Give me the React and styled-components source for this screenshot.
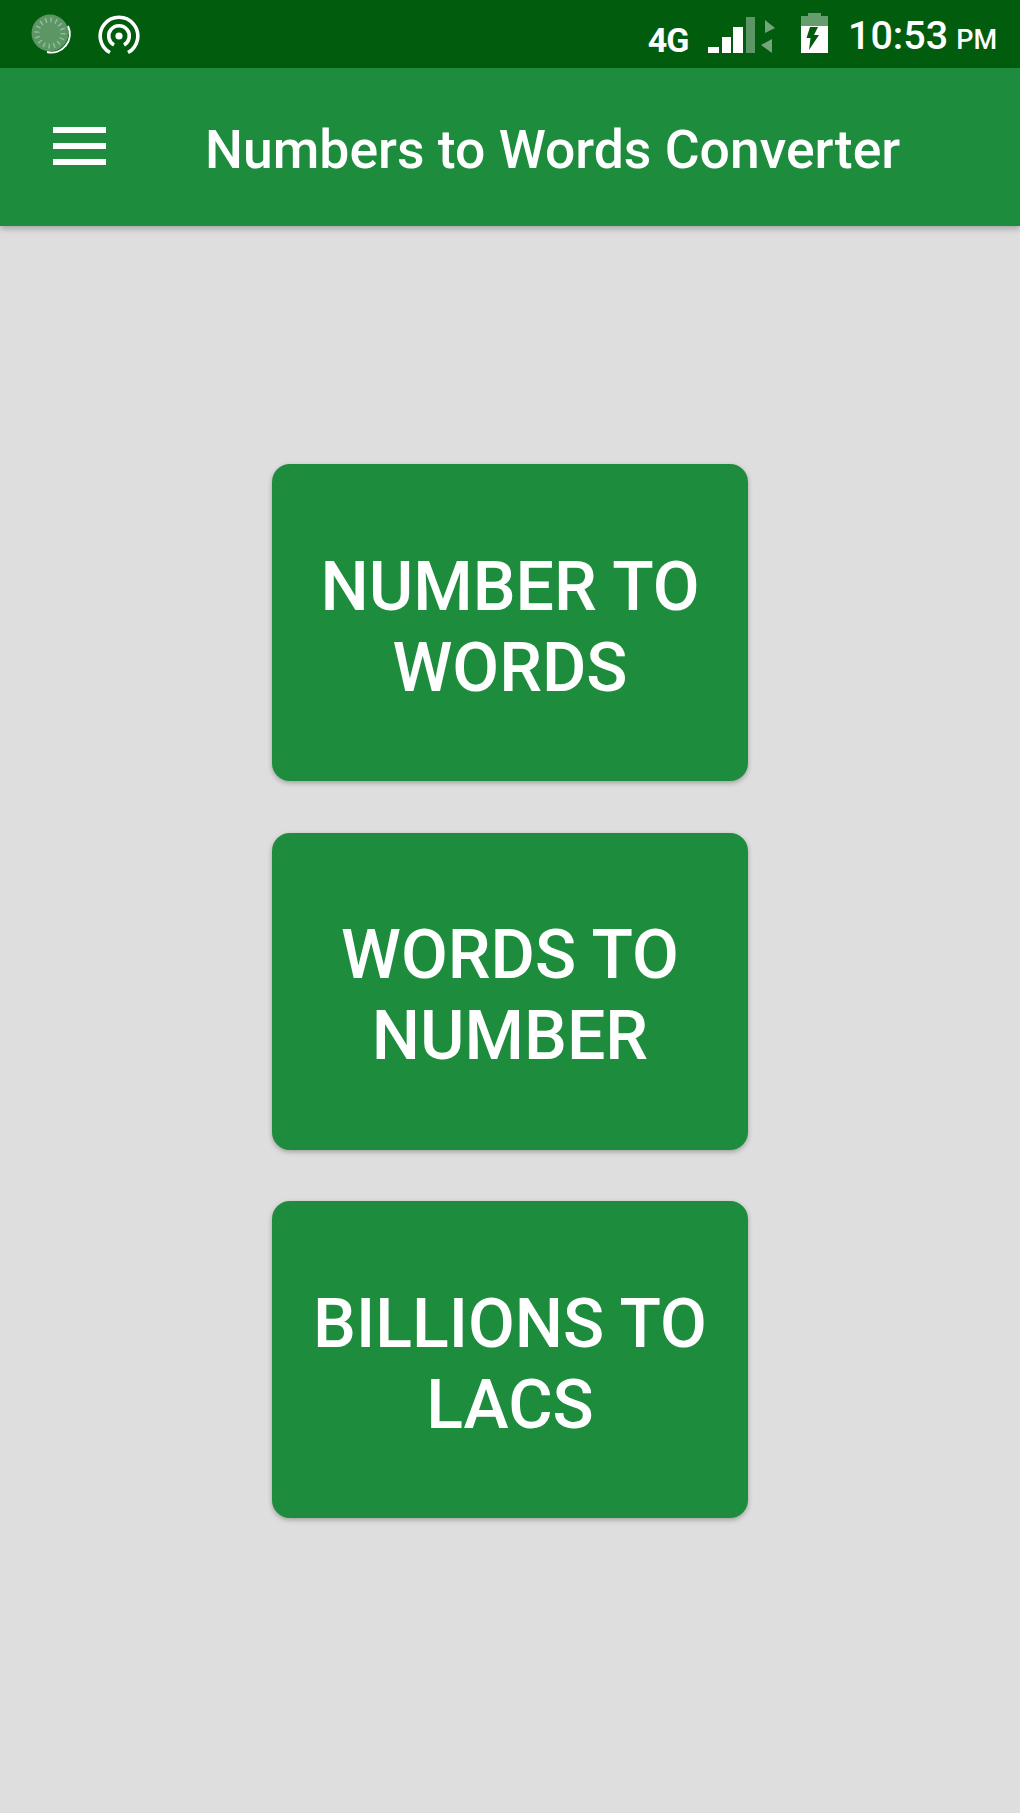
import React from "react"
import styled, { createGlobalStyle } from "styled-components"

const GlobalStyle = createGlobalStyle`
  html, body {
    margin: 0;
    padding: 0;
    background: #dedede;
    font-family: Roboto, "Liberation Sans", sans-serif;
  }
`

const Page = styled.div`
  width: 1020px;
  height: 1813px;
  overflow: hidden;
  background: #dedede;
`

const StatusBar = styled.div`
  height: 68px;
  background: #015c0e;
  display: flex;
  align-items: center;
  color: #fff;
  box-sizing: border-box;
  padding: 0 23px 0 30px;
`

const StatusLeft = styled.div`
  display: flex;
  align-items: center;
  gap: 26px;
  flex: 1;
`

const StatusRight = styled.div`
  display: flex;
  align-items: center;
`

const NetLabel = styled.span`
  font-size: 34px;
  font-weight: 700;
  letter-spacing: -1px;
  line-height: 1;
  margin-top: 12px;
  margin-right: 20px;
`

const IconSlot = styled.span`
  display: flex;
  margin-left: ${({ $left }) => $left || 0}px;
  margin-top: ${({ $top }) => $top || 0}px;
`

const Clock = styled.span`
  font-size: 39.5px;
  font-weight: 500;
  margin-left: 19.5px;
  line-height: 1;
  margin-top: 3px;
`

const Meridiem = styled.span`
  font-size: 27px;
  font-weight: 500;
  line-height: 1;
  margin-left: 8px;
  margin-top: 12px;
`

const AppBar = styled.header`
  height: 158px;
  background: #1d8c3c;
  box-shadow: 0 3px 6px rgba(0, 0, 0, 0.25);
  display: flex;
  align-items: center;
  position: relative;
  padding-left: 53px;
`

const MenuButton = styled.div`
  width: 53px;
  display: flex;
  flex-direction: column;
  gap: 10px;
  margin-top: -2px;
`

const MenuLine = styled.span`
  display: block;
  height: 6px;
  background: #fff;
`

const Title = styled.h1`
  margin: 5px 0 0 99px;
  font-size: 53.5px;
  font-weight: 500;
  color: #fff;
  white-space: nowrap;
`

const Menu = styled.main`
  display: flex;
  flex-direction: column;
  align-items: center;
  gap: 51.5px;
  padding-top: 238px;
`

const BigButton = styled.div`
  width: 476px;
  height: 317px;
  box-sizing: border-box;
  padding: 14px 20px 4px;
  background: #1d8c3c;
  border-radius: 18px;
  box-shadow: 0 2px 5px rgba(0, 0, 0, 0.28);
  display: flex;
  align-items: center;
  justify-content: center;
  text-align: center;
  color: #fff;
  font-size: 68px;
  font-weight: 500;
  line-height: 81px;
`

const SyncIcon = () => (
  <svg width="42" height="42" viewBox="0 0 42 42">
    <circle cx="20" cy="20" r="18.5" fill="#fff" fillOpacity="0.36" />
    <path d="M38 13 A18.5 18.5 0 0 1 17 39" fill="none" stroke="#fff" strokeWidth="2" />
    <circle cx="20" cy="20" r="13" fill="none" stroke="#fff" strokeOpacity="0.35" strokeWidth="5" strokeDasharray="1.5 3.6" />
  </svg>
)

const HotspotIcon = () => (
  <svg width="42" height="42" viewBox="0 -2 42 42" fill="none" stroke="#fff" strokeWidth="3.6">
    <path d="M12 37.5 A18.8 18.8 0 1 1 30 37.5" />
    <path d="M16 30 A10.3 10.3 0 1 1 26 30" />
    <circle cx="21" cy="21" r="3.6" fill="#fff" stroke="none" />
  </svg>
)

const SignalIcon = () => (
  <svg width="67" height="36" viewBox="0 0 67 36" fill="#fff">
    <rect x="0" y="30" width="11" height="6" />
    <rect x="14" y="20" width="9" height="16" />
    <rect x="25" y="10" width="10" height="26" />
    <rect x="38" y="0" width="9" height="36" fillOpacity="0.36" />
    <path d="M57 3 L67 11 L57 16 Z" fillOpacity="0.45" />
    <path d="M64 22 L53 28 L64 36 Z" fillOpacity="0.45" />
  </svg>
)

const BatteryIcon = () => (
  <svg width="27" height="40" viewBox="0 0 27 40">
    <path d="M7 0 H20 V3 H27 V13 H0 V3 H7 Z" fill="#fff" fillOpacity="0.4" />
    <path d="M0 13 H27 V40 H0 Z" fill="#fff" />
    <path d="M9 14 H17 L13 22 H18 L8 37 L9.5 25 H5.5 Z" fill="#015c0e" />
  </svg>
)

const buttons = [
  ["NUMBER TO", "WORDS"],
  ["WORDS TO", "NUMBER"],
  ["BILLIONS TO", "LACS"],
]

const App = () => {
  return (
    <Page>
      <GlobalStyle />
      <StatusBar>
        <StatusLeft>
          <SyncIcon />
          <HotspotIcon />
        </StatusLeft>
        <StatusRight>
          <NetLabel>4G</NetLabel>
          <IconSlot $top={2}>
            <SignalIcon />
          </IconSlot>
          <IconSlot $left={26} $top={-2}>
            <BatteryIcon />
          </IconSlot>
          <Clock>10:53</Clock>
          <Meridiem>PM</Meridiem>
        </StatusRight>
      </StatusBar>
      <AppBar>
        <MenuButton>
          <MenuLine />
          <MenuLine />
          <MenuLine />
        </MenuButton>
        <Title>Numbers to Words Converter</Title>
      </AppBar>
      <Menu>
        {buttons.map(([first, second]) => (
          <BigButton key={first}>
            <span>
              {first}
              <br />
              {second}
            </span>
          </BigButton>
        ))}
      </Menu>
    </Page>
  )
}

export default App
